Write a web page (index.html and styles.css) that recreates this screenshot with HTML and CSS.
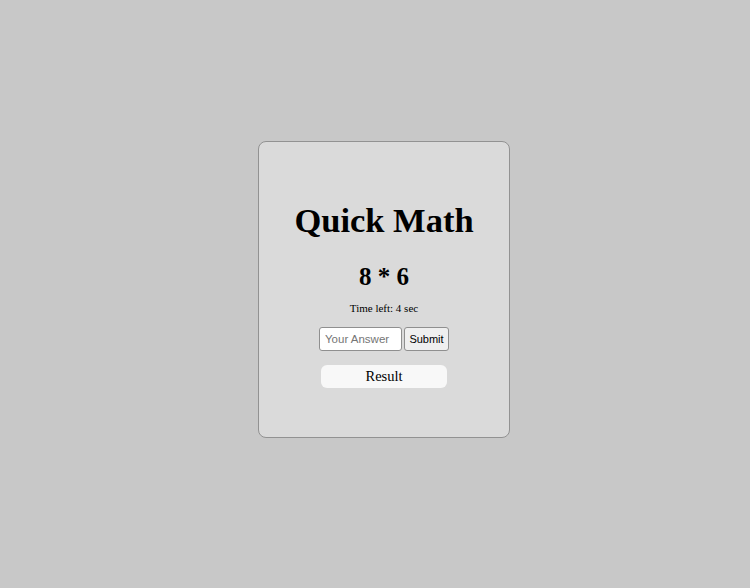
FILE: index.html
```html
<!DOCTYPE html>
<html>
<head>
<meta charset="utf-8">
<title>Quick Math</title>
<link rel="stylesheet" href="styles.css">
</head>
<body>
<div class="page">
  <div class="card">
    <h1 class="title">Quick Math</h1>
    <h2 class="problem">8 * 6</h2>
    <p class="timer">Time left: 4 sec</p>
    <div class="answer-row">
      <input class="answer" type="text" placeholder="Your Answer">
      <button class="submit" type="button">Submit</button>
    </div>
    <div class="result">Result</div>
  </div>
</div>
</body>
</html>
```
FILE: styles.css
```css
html, body {
  margin: 0;
  padding: 0;
}
body {
  background: #c8c8c8;
  font-family: "Liberation Serif", "Times New Roman", serif;
  color: #000;
}
.page {
  padding-top: 141px;
  padding-left: 258px;
  height: 588px;
  box-sizing: border-box;
}
.card {
  width: 252px;
  height: 297px;
  box-sizing: border-box;
  background: #dadada;
  border: 1px solid #929292;
  border-radius: 8px;
  display: flex;
  flex-direction: column;
  align-items: center;
  padding-top: 58px;
}
.title {
  font-size: 34.5px;
  font-weight: bold;
  line-height: 40px;
  margin: 0;
}
.problem {
  font-size: 25px;
  font-weight: bold;
  line-height: 28px;
  margin: 23px 0 0;
}
.timer {
  font-size: 11px;
  line-height: 13px;
  margin: 11px 0 0;
}
.answer-row {
  display: flex;
  gap: 2px;
  margin-top: 12px;
}
.answer {
  width: 83px;
  height: 24px;
  box-sizing: border-box;
  border: 1px solid #8f8f8f;
  border-radius: 3px;
  background: #fff;
  padding: 0 5px;
  font-family: "Liberation Sans", Arial, sans-serif;
  font-size: 11.5px;
  margin: 0;
}
.answer::placeholder {
  color: #757575;
}
.submit {
  width: 45px;
  height: 24px;
  box-sizing: border-box;
  border: 1px solid #8f8f8f;
  border-radius: 3px;
  background: #efefef;
  padding: 0;
  font-family: "Liberation Sans", Arial, sans-serif;
  font-size: 11px;
  color: #000;
  margin: 0;
}
.result {
  margin-top: 14px;
  width: 126px;
  height: 23px;
  background: #f8f8f8;
  border-radius: 6px;
  font-size: 14.5px;
  line-height: 23px;
  text-align: center;
}
```
